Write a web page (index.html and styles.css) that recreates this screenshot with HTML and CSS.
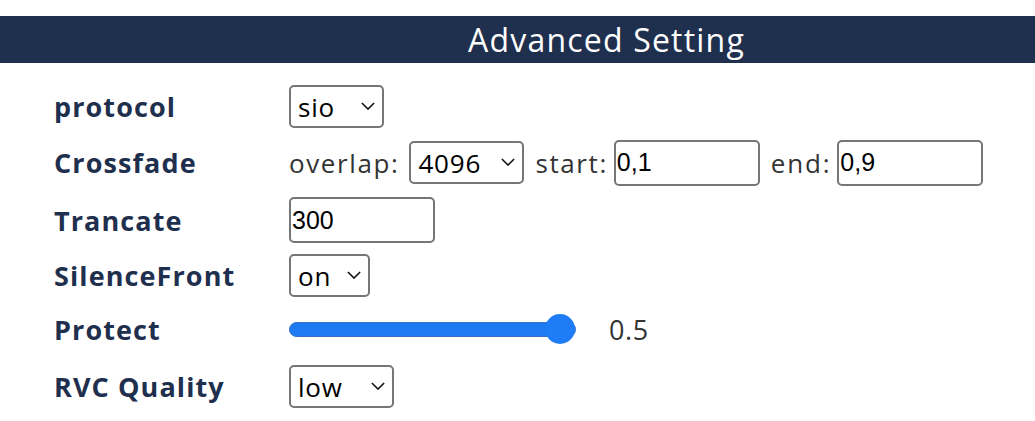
FILE: index.html
```html
<!DOCTYPE html>
<html lang="en">
<head>
    <meta charset="UTF-8">
    <meta name="viewport" content="width=device-width, initial-scale=1.0">
    <title>Advanced Setting</title>
    <link rel="stylesheet" href="styles.css">
</head>
<body>

<div class="advanced-setting">
    <div class="setting-header">Advanced Setting</div>

    <div class="setting-body">
        <div class="setting-label">protocol</div>
        <div class="setting-control">
            <span class="select-wrap">
                <select class="select-protocol">
                    <option>sio</option>
                    <option>rest</option>
                </select>
                <svg class="chevron" viewBox="0 0 16 9"><path d="M1 1l7 7 7-7"/></svg>
            </span>
        </div>

        <div class="setting-label">Crossfade</div>
        <div class="setting-control">
            <span class="control-text overlap-text">overlap:</span>
            <span class="select-wrap">
                <select class="select-overlap">
                    <option>4096</option>
                    <option>2048</option>
                </select>
                <svg class="chevron" viewBox="0 0 16 9"><path d="M1 1l7 7 7-7"/></svg>
            </span>
            <span class="control-text spaced">start:</span>
            <input class="text-input" type="text" value="0,1">
            <span class="control-text spaced end-text">end:</span>
            <input class="text-input" type="text" value="0,9">
        </div>

        <div class="setting-label">Trancate</div>
        <div class="setting-control">
            <input class="text-input" type="text" value="300">
        </div>

        <div class="setting-label">SilenceFront</div>
        <div class="setting-control">
            <span class="select-wrap">
                <select class="select-silence">
                    <option>on</option>
                    <option>off</option>
                </select>
                <svg class="chevron" viewBox="0 0 16 9"><path d="M1 1l7 7 7-7"/></svg>
            </span>
        </div>

        <div class="setting-label">Protect</div>
        <div class="setting-control">
            <input class="range-input" type="range" min="0" max="0.5" step="0.1" value="0.5">
            <span class="range-value">0.5</span>
        </div>

        <div class="setting-label">RVC Quality</div>
        <div class="setting-control">
            <span class="select-wrap">
                <select class="select-quality">
                    <option>low</option>
                    <option>high</option>
                </select>
                <svg class="chevron" viewBox="0 0 16 9"><path d="M1 1l7 7 7-7"/></svg>
            </span>
        </div>
    </div>
</div>

</body>
</html>
```

FILE: styles.css
```css
body {
    margin: 0;
    padding: 0;
    background-color: #ffffff;
    font-family: "Open Sans", "Noto Sans", sans-serif;
}

.advanced-setting {
    padding-top: 16px;
}

.setting-header {
    height: 47px;
    line-height: 47px;
    padding-left: 178px;
    text-align: center;
    background-color: #1f2f4e;
    color: #ffffff;
    font-size: 32px;
    letter-spacing: 1.2px;
}

.setting-body {
    display: grid;
    grid-template-columns: 235px 1fr;
    grid-template-rows: 55px 57px 58px 53px 54px 61px;
    align-items: center;
    padding: 16px 0 0 54px;
}

.setting-label {
    font-size: 27px;
    font-weight: 700;
    letter-spacing: 1.1px;
    color: #1f2f4e;
}

.setting-control {
    display: flex;
    align-items: center;
}

.control-text {
    font-size: 26px;
    letter-spacing: 1.6px;
    color: #333333;
    margin-right: 6px;
}

.overlap-text {
    margin-right: 10px;
}

.end-text {
    letter-spacing: 1.8px;
}

.spaced {
    margin-left: 11px;
}

.select-wrap {
    position: relative;
    display: inline-flex;
}

select {
    -webkit-appearance: none;
    appearance: none;
    height: 43px;
    padding: 0 0 0 7px;
    border: 2px solid #767676;
    border-radius: 5px;
    background-color: #ffffff;
    color: #000000;
    font-family: "Open Sans", "Noto Sans", sans-serif;
    font-size: 26px;
    letter-spacing: 0.8px;
}

.chevron {
    position: absolute;
    right: 9px;
    top: 17px;
    width: 14px;
    height: 8px;
    fill: none;
    stroke: #111111;
    stroke-width: 1.8;
    pointer-events: none;
}

.select-protocol {
    width: 95px;
}

.select-overlap {
    width: 115px;
}

.select-silence {
    width: 81px;
}

.select-quality {
    width: 105px;
}

.text-input {
    width: 146px;
    height: 46px;
    box-sizing: border-box;
    padding: 0 1px;
    border: 2px solid #767676;
    border-radius: 5px;
    font-family: "Liberation Sans", Arial, sans-serif;
    font-size: 25px;
    color: #000000;
}

.range-input {
    -webkit-appearance: none;
    appearance: none;
    width: 287px;
    height: 30px;
    margin: 0;
    background: transparent;
}

.range-input::-webkit-slider-runnable-track {
    height: 15px;
    border-radius: 8px;
    background-color: #1d7af3;
    border: 1px solid #3a6fc2;
}

.range-input::-webkit-slider-thumb {
    -webkit-appearance: none;
    width: 30px;
    height: 30px;
    margin-top: -8.5px;
    border-radius: 50%;
    background-color: #1f7cf7;
    border: none;
}

.range-value {
    margin-left: 33px;
    font-size: 27px;
    letter-spacing: 0.6px;
    color: #333333;
}
```
